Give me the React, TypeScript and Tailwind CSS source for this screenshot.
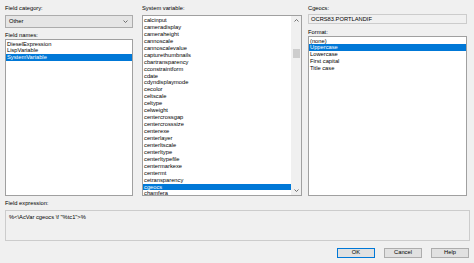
const fieldNames = ["DieselExpression", "LispVariable", "SystemVariable"];

const sysVars = [
  "calcinput",
  "cameradisplay",
  "cameraheight",
  "cannoscale",
  "cannoscalevalue",
  "capturethumbnails",
  "cbartransparency",
  "cconstraintform",
  "cdate",
  "cdyndisplaymode",
  "cecolor",
  "celtscale",
  "celtype",
  "celweight",
  "centercrossgap",
  "centercrosssize",
  "centerexe",
  "centerlayer",
  "centerltscale",
  "centerltype",
  "centerltypefile",
  "centermarkexe",
  "centermt",
  "cetransparency",
  "cgeocs",
  "chamfera",
];

const formats = ["(none)", "Uppercase", "Lowercase", "First capital", "Title case"];

const Chevron = ({ up }: { up?: boolean }) => (
  <svg width="5" height="3" viewBox="0 0 5 3" className="block">
    <path
      d={up ? "M0.5 2.5 L2.5 0.5 L4.5 2.5" : "M0.5 0.5 L2.5 2.5 L4.5 0.5"}
      fill="none"
      stroke="#606060"
      strokeWidth="0.9"
    />
  </svg>
);

const Item = ({ text, selected }: { text: string; selected?: boolean }) => (
  <div
    className={`h-[6.95px] leading-[6.95px] pl-[1px] whitespace-nowrap ${
      selected ? "bg-[#0078d7] text-white" : ""
    }`}
  >
    {text}
  </div>
);

const Label = ({ text }: { text: string }) => (
  <div className="h-[7px] leading-[7px] whitespace-nowrap">{text}</div>
);

const App = () => {
  return (
    <div className="w-[474px] h-[263px] bg-[#f0f0f0] text-[5.75px] text-black overflow-hidden font-['Liberation_Sans',Arial,sans-serif]">
      <div className="flex pt-[5px] pl-[5px]">
        {/* left column */}
        <div className="w-[128px] flex flex-col">
          <Label text="Field category:" />
          <div className="mt-[3px] h-[13px] bg-[#e5e5e5] border border-[#acacac] flex items-center justify-between pl-[3px] pr-[4px]">
            <span>Other</span>
            <Chevron />
          </div>
          <div className="mt-[4px]">
            <Label text="Field names:" />
          </div>
          <div className="h-[157px] bg-white border border-[#a0a0a0] pt-[0.5px]">
            {fieldNames.map((n) => (
              <Item key={n} text={n} selected={n === "SystemVariable"} />
            ))}
          </div>
        </div>

        {/* middle column */}
        <div className="ml-[9px] w-[160px] flex flex-col">
          <Label text="System variable:" />
          <div className="mt-[3px] h-[181px] bg-white border border-[#a0a0a0] flex">
            <div className="flex-1 pt-[1px]">
              {sysVars.map((n) => (
                <Item key={n} text={n} selected={n === "cgeocs"} />
              ))}
            </div>
            <div className="w-[10px] bg-[#f0f0f0] flex flex-col items-center">
              <div className="h-[9px] flex items-center justify-center">
                <Chevron up />
              </div>
              <div className="mt-[24px] w-[7px] h-[9px] bg-[#cdcdcd]" />
              <div className="flex-1" />
              <div className="h-[9px] flex items-center justify-center">
                <Chevron />
              </div>
            </div>
          </div>
        </div>

        {/* right column */}
        <div className="ml-[6px] w-[159px] flex flex-col">
          <Label text="Cgeocs:" />
          <div className="mt-[2px] h-[10px] bg-[#f0f0f0] border border-[#cccccc] flex items-center pl-[2px]">
            OCRS83.PORTLANDIF
          </div>
          <div className="mt-[5px]">
            <Label text="Format:" />
          </div>
          <div className="h-[160px] bg-white border border-[#a0a0a0] pt-[0.5px]">
            {formats.map((n) => (
              <Item key={n} text={n} selected={n === "Uppercase"} />
            ))}
          </div>
        </div>
      </div>

      <div className="pl-[5px] mt-[4px]">
        <Label text="Field expression:" />
        <div className="mt-[3px] w-[465px] h-[31px] border border-[#cccccc] bg-[#f0f0f0] pl-[3px] pt-[3px] leading-[7px]">
          {'%<\\AcVar cgeocs \\f "%tc1">%'}
        </div>
      </div>

      <div className="flex justify-end gap-[9px] pr-[5px] mt-[7px]">
        <button className="w-[38px] h-[10px] bg-[#e1e1e1] border border-[#0078d7] leading-none">OK</button>
        <button className="w-[38px] h-[10px] bg-[#e1e1e1] border border-[#adadad] leading-none">Cancel</button>
        <button className="w-[38px] h-[10px] bg-[#e1e1e1] border border-[#adadad] leading-none">Help</button>
      </div>
    </div>
  );
};

export default App;
